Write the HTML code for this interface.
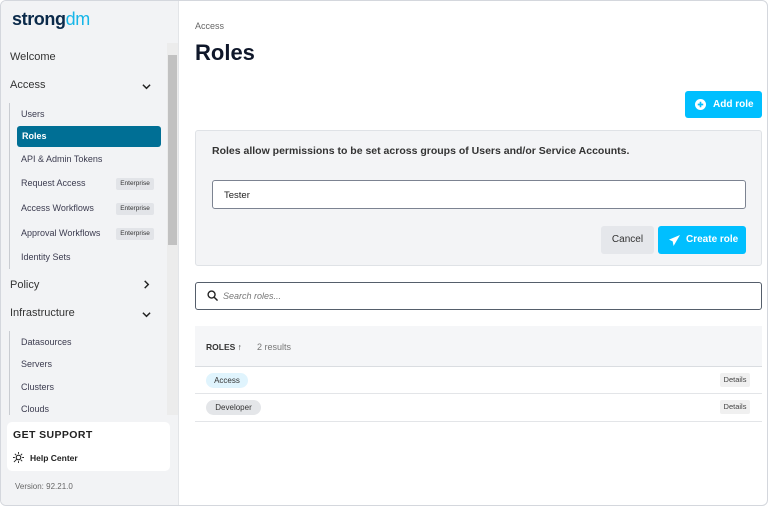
<!DOCTYPE html>
<html><head><meta charset="utf-8"><style>
*{box-sizing:border-box;margin:0;padding:0}
body{width:768px;height:506px;overflow:hidden;font-family:"Liberation Sans",sans-serif;background:#fff;color:#1f2937}
.frame{position:absolute;left:0;top:0;width:768px;height:506px;border:1px solid #d4d7dd;border-radius:6px;overflow:hidden}
.side{position:absolute;left:0;top:0;width:178px;height:506px;background:#f2f3f5;border-right:1px solid #e3e5e8}
.logo{position:absolute;left:11px;top:8px;font-size:18px;font-weight:bold;color:#0b2a4a;letter-spacing:-0.4px}
.logo span{color:#17b6e8;font-weight:normal}
.it{position:absolute;font-size:10.5px;color:#374151}
.top{left:9px;font-size:11px;color:#333}
.sub{left:20px;font-size:9px;color:#3b3b4f}
.chev{position:absolute;left:141px;width:9px;height:9px}
.vl{position:absolute;left:8px;width:1px;background:#c9ccd1}
.sel{position:absolute;left:16px;top:125px;width:144px;height:21px;background:#006f95;border-radius:3px;color:#fff;font-size:9px;font-weight:bold;padding:5px 0 0 5px}
.ent{position:absolute;left:115px;width:38px;height:12px;background:#e2e4e8;border-radius:2px;font-size:6.5px;color:#333;text-align:center;line-height:12px}
.sb{position:absolute;left:166px;top:42px;width:11px;height:372px;background:#ececec}
.sb i{position:absolute;left:1px;top:12px;width:9px;height:190px;background:#c1c1c1}
.card{position:absolute;left:6px;top:421px;width:163px;height:49px;background:#fff;border-radius:5px}
.main{position:absolute;left:178px;top:0;right:0;height:506px}
.btn{position:absolute;background:#00bfff;color:#fff;font-size:10px;font-weight:bold;border-radius:3px}
</style></head><body><div class="frame">
<div class="side">
<div class="logo">strong<span>dm</span></div>
<div class="it top" style="top:50px">Welcome</div>
<div class="it top" style="top:78px">Access</div>
<svg class="chev" style="top:81px" viewBox="0 0 10 10"><path d="M1 3l4 4 4-4" fill="none" stroke="#222" stroke-width="1.6"/></svg>
<div class="vl" style="top:102px;height:166px"></div>
<div class="it sub" style="top:108px">Users</div>
<div class="sel">Roles</div>
<div class="it sub" style="top:153px">API &amp; Admin Tokens</div>
<div class="it sub" style="top:177px">Request Access</div><div class="ent" style="top:177px">Enterprise</div>
<div class="it sub" style="top:202px">Access Workflows</div><div class="ent" style="top:202px">Enterprise</div>
<div class="it sub" style="top:227px">Approval Workflows</div><div class="ent" style="top:227px">Enterprise</div>
<div class="it sub" style="top:251px">Identity Sets</div>
<div class="it top" style="top:278px">Policy</div>
<svg class="chev" style="top:279px" viewBox="0 0 10 10"><path d="M3 1l4 4-4 4" fill="none" stroke="#222" stroke-width="1.6"/></svg>
<div class="it top" style="top:306px">Infrastructure</div>
<svg class="chev" style="top:309px" viewBox="0 0 10 10"><path d="M1 3l4 4 4-4" fill="none" stroke="#222" stroke-width="1.6"/></svg>
<div class="vl" style="top:330px;height:84px"></div>
<div class="it sub" style="top:336px">Datasources</div>
<div class="it sub" style="top:358px">Servers</div>
<div class="it sub" style="top:381px">Clusters</div>
<div class="it sub" style="top:403px">Clouds</div>
<div class="sb"><i></i></div>
<div class="card">
<div style="position:absolute;left:6px;top:7px;font-size:10.5px;font-weight:bold;color:#222;letter-spacing:.4px">GET SUPPORT</div>
<svg style="position:absolute;left:6px;top:30px" width="11" height="11" viewBox="0 0 12 12"><circle cx="6" cy="6" r="2.5" fill="none" stroke="#222" stroke-width="1.2"/><path d="M1 11l3-3M6 0v2M0 6h2M10 6h2M6 10v2M2 2l1.5 1.5M10 2L8.5 3.5M10 10L8.5 8.5" stroke="#222"/></svg>
<div style="position:absolute;left:23px;top:31px;font-size:8.5px;font-weight:bold;color:#222">Help Center</div>
</div>
<div style="position:absolute;left:14px;top:481px;font-size:8px;color:#666">Version: 92.21.0</div>
</div>
<div class="main">
<div style="position:absolute;left:16px;top:20px;font-size:9px;color:#666">Access</div>
<div style="position:absolute;left:16px;top:39px;font-size:22px;font-weight:bold;color:#0f172a">Roles</div>
<div class="btn" style="left:506px;top:90px;width:77px;height:27px;padding:8px 0 0 28px">Add role</div>
<svg style="position:absolute;left:516px;top:98px" width="11" height="11" viewBox="0 0 12 12"><circle cx="6" cy="6" r="6" fill="#fff"/><path d="M6 3v6M3 6h6" stroke="#00bfff" stroke-width="1.8"/></svg>
<div style="position:absolute;left:16px;top:129px;width:567px;height:136px;background:#f3f4f6;border:1px solid #dfe2e6;border-radius:3px">
<div style="position:absolute;left:16px;top:14px;font-size:10.5px;font-weight:bold;color:#333">Roles allow permissions to be set across groups of Users and/or Service Accounts.</div>
<div style="position:absolute;left:16px;top:49px;width:534px;height:29px;background:#fff;border:1px solid #7c8391;border-radius:3px;font-size:9.5px;color:#222;padding:9px 0 0 11px">Tester</div>
<div style="position:absolute;left:405px;top:95px;width:53px;height:28px;background:#e5e7eb;border-radius:3px;font-size:10px;color:#333;text-align:center;line-height:28px">Cancel</div>
<div class="btn" style="left:462px;top:95px;width:88px;height:28px;padding:8px 0 0 28px">Create role</div>
<svg style="position:absolute;left:473px;top:104px" width="11" height="11" viewBox="0 0 12 12"><path d="M12 0L0 5l4 2 1 5 7-12z" fill="#fff"/></svg>
</div>
<div style="position:absolute;left:16px;top:281px;width:567px;height:28px;border:1px solid #555e6b;border-radius:3px"></div>
<svg style="position:absolute;left:28px;top:289px" width="11" height="11" viewBox="0 0 12 12"><circle cx="5" cy="5" r="3.8" fill="none" stroke="#222" stroke-width="1.5"/><path d="M8 8l3.5 3.5" stroke="#222" stroke-width="1.6"/></svg>
<div style="position:absolute;left:44px;top:290px;font-size:9px;font-style:italic;color:#777">Search roles...</div>
<div style="position:absolute;left:16px;top:325px;width:567px;height:41px;background:#f5f6f8;border-bottom:1px solid #dadde1"></div>
<div style="position:absolute;left:27px;top:341px;font-size:8.5px;font-weight:bold;color:#333">ROLES &#8593;</div>
<div style="position:absolute;left:78px;top:341px;font-size:9px;color:#777">2 results</div>
<div style="position:absolute;left:27px;top:372px;width:42px;height:15px;background:#e0f4fd;border-radius:8px;font-size:8px;color:#333;text-align:center;line-height:15px">Access</div>
<div style="position:absolute;left:541px;top:372px;width:30px;height:14px;background:#f0f0f0;border-radius:2px;font-size:7.5px;color:#444;text-align:center;line-height:14px">Details</div>
<div style="position:absolute;left:16px;top:392px;width:567px;height:1px;background:#e3e5e8"></div>
<div style="position:absolute;left:27px;top:399px;width:55px;height:15px;background:#e4e6e9;border-radius:8px;font-size:8px;color:#333;text-align:center;line-height:15px">Developer</div>
<div style="position:absolute;left:541px;top:399px;width:30px;height:14px;background:#f0f0f0;border-radius:2px;font-size:7.5px;color:#444;text-align:center;line-height:14px">Details</div>
<div style="position:absolute;left:16px;top:420px;width:567px;height:1px;background:#e3e5e8"></div>
</div>
</div></body></html>
